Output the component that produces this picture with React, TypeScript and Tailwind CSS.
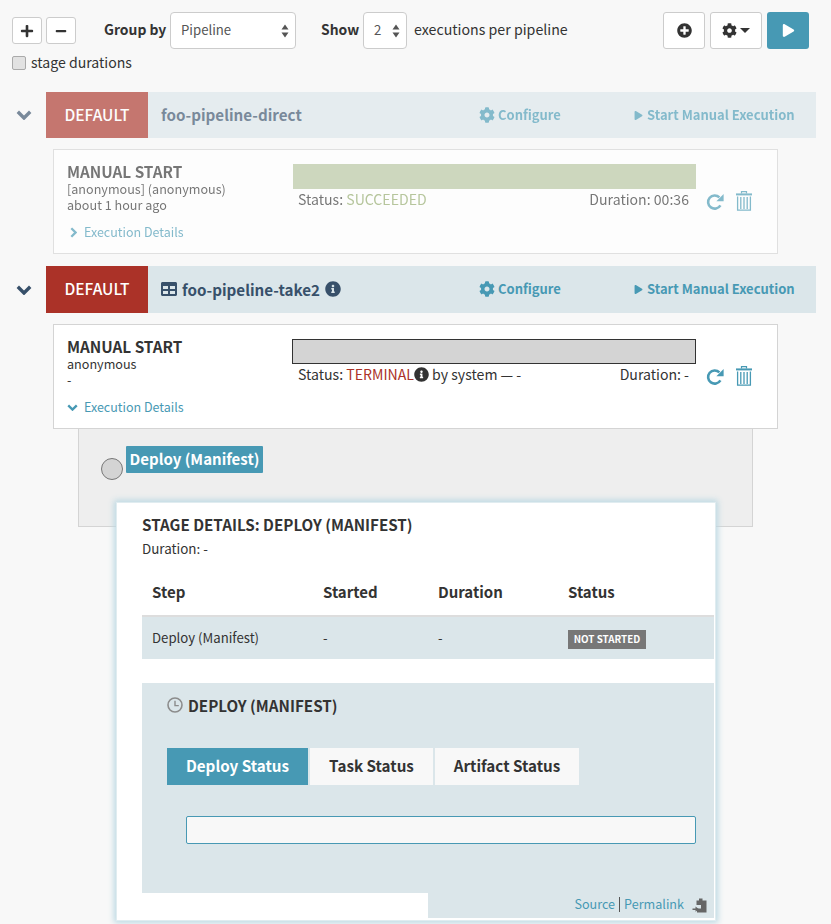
import {
  FaCog,
  FaInfoCircle,
  FaMinus,
  FaPlay,
  FaPlus,
  FaPlusCircle,
  FaTable,
} from "react-icons/fa";

function SelectArrows() {
  return (
    <svg width="8" height="14" viewBox="0 0 8 14" className="absolute right-[6px] top-[11px] text-[#555]">
      <path d="M4 0.5 L7.5 5.5 H0.5 Z M4 13.5 L7.5 8.5 H0.5 Z" fill="currentColor" />
    </svg>
  );
}

function ChevronDown({ className }: { className: string }) {
  return (
    <svg viewBox="0 0 16 10" fill="none" stroke="currentColor" className={className}>
      <path d="M1.8 1.8L8 8L14.2 1.8" strokeWidth="3.4" />
    </svg>
  );
}

function ChevronRight({ className }: { className: string }) {
  return (
    <svg viewBox="0 0 10 16" fill="none" stroke="currentColor" className={className}>
      <path d="M1.8 1.8L8 8L1.8 14.2" strokeWidth="3.4" />
    </svg>
  );
}

function RefreshIcon() {
  return (
    <svg width="18" height="18" viewBox="0 0 18 18" fill="none" className="mt-[2px]">
      <path d="M14.4 12.4A6.6 6.6 0 1 1 13.4 4.4" stroke="currentColor" strokeWidth="2.6" />
      <path d="M17.6 1V8.2H10.4Z" fill="currentColor" />
    </svg>
  );
}

function TrashIcon() {
  return (
    <svg width="16" height="20" viewBox="0 0 16 20" fill="none" stroke="currentColor">
      <path d="M5.5 2.5V0.7H10.5V2.5" strokeWidth="1.2" />
      <path d="M0 3.4H16" strokeWidth="2" />
      <path d="M1.6 5.5V19.2H14.4V5.5" strokeWidth="1.3" />
      <path d="M4.8 6V18M8 6V18M11.2 6V18" strokeWidth="1.3" />
    </svg>
  );
}

function ClipboardIcon() {
  return (
    <svg width="15" height="15" viewBox="0 0 15 15">
      <path d="M4.5 2.5H7V0.5H10.5V2.5H14.5V14.5H5V10.5H9V7H4.5Z" fill="#666" />
      <path d="M0.5 10.5H3.5V8.6L7 11.2L3.5 13.8V12H0.5Z" fill="#666" />
    </svg>
  );
}

function PipelineHeader({ name, active }: { name: string; active?: boolean }) {
  return (
    <div className={`flex items-stretch pl-[16px] pr-[15px] ${active ? "h-[47px]" : "h-[46px]"}`}>
      <div className="flex w-[30px] items-center">
        <ChevronDown className="h-[10px] w-[16px] text-[#37506a]" />
      </div>
      <div
        className={`flex w-[102px] items-center justify-center bg-[#ab3228] text-[15.5px] font-medium text-white ${
          active ? "pb-[1px]" : ""
        }`}
      >
        DEFAULT
      </div>
      <div className={`flex flex-1 items-center bg-[#dbe6ea] pl-[13px] ${active ? "pb-[1px]" : ""}`}>
        <div
          className={`flex w-[318px] items-center gap-[5px] text-[15.2px] font-semibold text-[#37506a] ${
            active ? "" : "pb-[2px]"
          }`}
        >
          {active && <FaTable className="h-[16px] w-[16px]" />}
          <span>{name}</span>
          {active && <FaInfoCircle className="h-[16px] w-[16px]" />}
        </div>
        <a className="flex w-[155px] items-center gap-[3px] text-[13px] font-semibold text-[#4799b4]">
          <FaCog className="h-[16px] w-[16px]" />
          Configure
        </a>
        <a className="flex items-center gap-[4px] whitespace-nowrap text-[13px] font-semibold text-[#4799b4]">
          <FaPlay className="h-[9px] w-[9px]" />
          Start Manual Execution
        </a>
      </div>
    </div>
  );
}

function ExecutionCard({
  user,
  time,
  open,
  bar,
  status,
  duration,
}: {
  user: string;
  time: string;
  open?: boolean;
  bar: string;
  status: React.ReactNode;
  duration: string;
}) {
  return (
    <div className="ml-[53px] mt-[11px] flex h-[105px] w-[725px] border border-[#d4d4d4] bg-white text-[#333]">
      <div className="w-[239px] pl-[13px] pt-[12px]">
        <div className="text-[15.3px] font-semibold leading-[18px]">MANUAL START</div>
        <div className="mt-[1px] text-[12.6px] leading-[16px]">{user}</div>
        <div className="text-[12.6px] leading-[16px]">{time}</div>
        <div className="mt-[10px] flex items-center text-[12.5px] leading-[18px] text-[#4799b4]">
          {open ? (
            <ChevronDown className="h-[7px] w-[11px]" />
          ) : (
            <ChevronRight className="ml-[3px] mr-[1px] h-[11px] w-[7px]" />
          )}
          <span className="ml-[6px]">Execution Details</span>
        </div>
      </div>
      <div className="mt-[14px] w-[403px]">
        <div className={bar} />
        <div className="mt-[1px] flex justify-between pl-[5px] pr-[7px] text-[14.1px] leading-[18px]">
          <span className="flex items-center">{status}</span>
          <span>{duration}</span>
        </div>
      </div>
      <div className="ml-[10px] mt-[41px] flex items-start gap-[12px] text-[#4799b4]">
        <RefreshIcon />
        <TrashIcon />
      </div>
    </div>
  );
}

function StageDetails() {
  return (
    <div className="relative ml-[116px] mt-[-25px] h-[419px] w-[600px] border border-[#e0ecf0] bg-white shadow-[0_0_6px_2px_#bcd9e3]">
      <div className="pl-[25px] pt-[11px] text-[#333]">
        <h3 className="text-[15.2px] font-semibold leading-[20px]">STAGE DETAILS: DEPLOY (MANIFEST)</h3>
        <div className="mt-[6px] text-[13.4px] leading-[17px]">Duration: -</div>
      </div>
      <div className="ml-[25px] mr-[1px] mt-[15px] text-[#333]">
        <div className="flex h-[45px] items-center border-b-2 border-[#ddd] pb-[2px] pl-[10px] text-[15px] font-semibold">
          <span className="w-[171px]">Step</span>
          <span className="w-[115px]">Started</span>
          <span className="w-[130px]">Duration</span>
          <span>Status</span>
        </div>
        <div className="flex h-[42px] items-center bg-[#dbe6ea] pb-[1px] pl-[10px] text-[13.2px]">
          <span className="w-[171px]">Deploy (Manifest)</span>
          <span className="w-[115px]">-</span>
          <span className="w-[130px]">-</span>
          <span className="mt-[4px] flex h-[19px] w-[78px] items-center justify-center bg-[#777] text-[9.8px] font-semibold text-white">
            NOT STARTED
          </span>
        </div>
      </div>
      <div className="ml-[25px] mr-[1px] mt-[24px] h-[210px] bg-[#dbe6ea] pl-[25px] text-[#333]">
        <div className="flex items-center gap-[5px] pt-[12px] text-[15.2px] font-semibold leading-[20px]">
          <svg width="16" height="16" viewBox="0 0 16 16" fill="none" stroke="#8c8c8c">
            <circle cx="8" cy="8" r="7" strokeWidth="1.6" />
            <path d="M8 3.8V8.6H11.8" strokeWidth="1.4" />
          </svg>
          DEPLOY (MANIFEST)
        </div>
        <div className="mt-[33px] flex h-[37px] gap-[2px] text-[15.2px] font-semibold">
          <div className="flex w-[141px] items-center justify-center bg-[#4799b4] pb-[2px] text-white">Deploy Status</div>
          <div className="flex w-[123px] items-center justify-center bg-[#f8f8f8] pb-[2px]">Task Status</div>
          <div className="flex w-[144px] items-center justify-center bg-[#f8f8f8] pb-[2px]">Artifact Status</div>
        </div>
        <div className="ml-[19px] mt-[31px] h-[28px] w-[510px] rounded-[2px] border border-[#4799b4] bg-[#f8f8f8]" />
      </div>
      <div className="ml-auto mr-[1px] flex h-[25px] w-[286px] items-center justify-end bg-[#dbe6ea] pb-[2px] pr-[7px] text-[12.6px] text-[#4799b4]">
        <span>Source</span>
        <span className="mx-[4px] h-[15px] w-px bg-[#555]" />
        <span>Permalink</span>
        <span className="ml-[8px] mt-[2px]">
          <ClipboardIcon />
        </span>
      </div>
    </div>
  );
}

export default function App() {
  return (
    <div className="h-[924px] w-[831px] overflow-hidden bg-[#f8f8f8] font-['Noto_Sans_CJK_SC','Source_Sans_Pro',sans-serif] text-[#333]">
      <div className="flex items-start pl-[12px] pr-[22px] pt-[12px]">
        <div className="mt-[5px] flex gap-[4px]">
          <button className="flex h-[27px] w-[30px] items-center justify-center rounded-[3px] border border-[#ccc] bg-white">
            <FaPlus className="h-[14px] w-[14px] text-[#333]" />
          </button>
          <button className="flex h-[27px] w-[30px] items-center justify-center rounded-[3px] border border-[#ccc] bg-white">
            <FaMinus className="h-[12px] w-[12px] text-[#333]" />
          </button>
        </div>
        <div className="ml-[28px] mt-[6px] w-[62px] whitespace-nowrap text-[13.9px] font-semibold leading-[22px]">
          Group by
        </div>
        <div className="relative ml-[4px] flex h-[37px] w-[126px] items-center rounded-[4px] border border-[#ccc] bg-white pb-[1px] pl-[10px] text-[13.2px] text-[#555]">
          Pipeline
          <SelectArrows />
        </div>
        <div className="ml-[25px] mt-[6px] w-[37px] text-[13.9px] font-semibold leading-[22px]">Show</div>
        <div className="relative ml-[5px] flex h-[37px] w-[44px] items-center rounded-[4px] border border-[#ccc] bg-white pb-[1px] pl-[10px] text-[13.2px] text-[#555]">
          2
          <SelectArrows />
        </div>
        <div className="ml-[7px] mt-[6px] text-[14.2px] leading-[22px]">executions per pipeline</div>
        <div className="ml-auto flex gap-[5px]">
          <button className="flex h-[37px] w-[42px] items-center justify-center rounded-[3px] border border-[#ccc] bg-white">
            <FaPlusCircle className="h-[15px] w-[15px] text-[#333]" />
          </button>
          <button className="flex h-[37px] w-[52px] items-center justify-center gap-[3px] rounded-[3px] border border-[#ccc] bg-white">
            <FaCog className="h-[15px] w-[15px] text-[#333]" />
            <span className="h-0 w-0 border-x-[5px] border-t-[5px] border-x-transparent border-t-[#333]" />
          </button>
          <button className="flex h-[37px] w-[42px] items-center justify-center rounded-[3px] bg-[#4799b4]">
            <FaPlay className="h-[13px] w-[13px] text-white" />
          </button>
        </div>
      </div>
      <div className="ml-[12px] mt-[5px] flex h-[18px] items-center text-[14.1px]">
        <span className="h-[14px] w-[14px] rounded-[2px] border border-[#aaa] bg-[#e2e2e2]" />
        <span className="ml-[5px]">stage durations</span>
      </div>

      <div className="mt-[20px] opacity-[0.66]">
        <PipelineHeader name="foo-pipeline-direct" />
        <ExecutionCard
          user="[anonymous] (anonymous)"
          time="about 1 hour ago"
          bar="h-[25px] bg-[#b6c5a0]"
          status={
            <>
              Status:&nbsp;<span className="text-[#93ab6c]">SUCCEEDED</span>
            </>
          }
          duration="Duration: 00:36"
        />
      </div>

      <div className="mt-[12px]">
        <PipelineHeader name="foo-pipeline-take2" active />
        <ExecutionCard
          user="anonymous"
          time="-"
          open
          bar="ml-[-1px] h-[25px] border border-[#333] bg-[#d4d4d4]"
          status={
            <>
              Status:&nbsp;<span className="text-[#ab3228]">TERMINAL</span>
              <FaInfoCircle className="h-[15px] w-[15px] text-[#333]" />
              &nbsp;by system — -
            </>
          }
          duration="Duration: -"
        />
        <div className="ml-[78px] h-[98px] w-[675px] border border-t-0 border-[#d4d4d4] bg-[#eee] pl-[22px] pt-[17px]">
          <div className="flex items-start">
            <span className="mt-[12px] h-[22px] w-[22px] rounded-full border border-[#777] bg-[#d4d4d4]" />
            <span className="ml-[3px] flex h-[27px] w-[137px] items-center justify-center whitespace-nowrap rounded-[1px] bg-[#4799b4] text-[15px] font-semibold text-white">
              Deploy (Manifest)
            </span>
          </div>
        </div>
        <StageDetails />
      </div>
    </div>
  );
}
